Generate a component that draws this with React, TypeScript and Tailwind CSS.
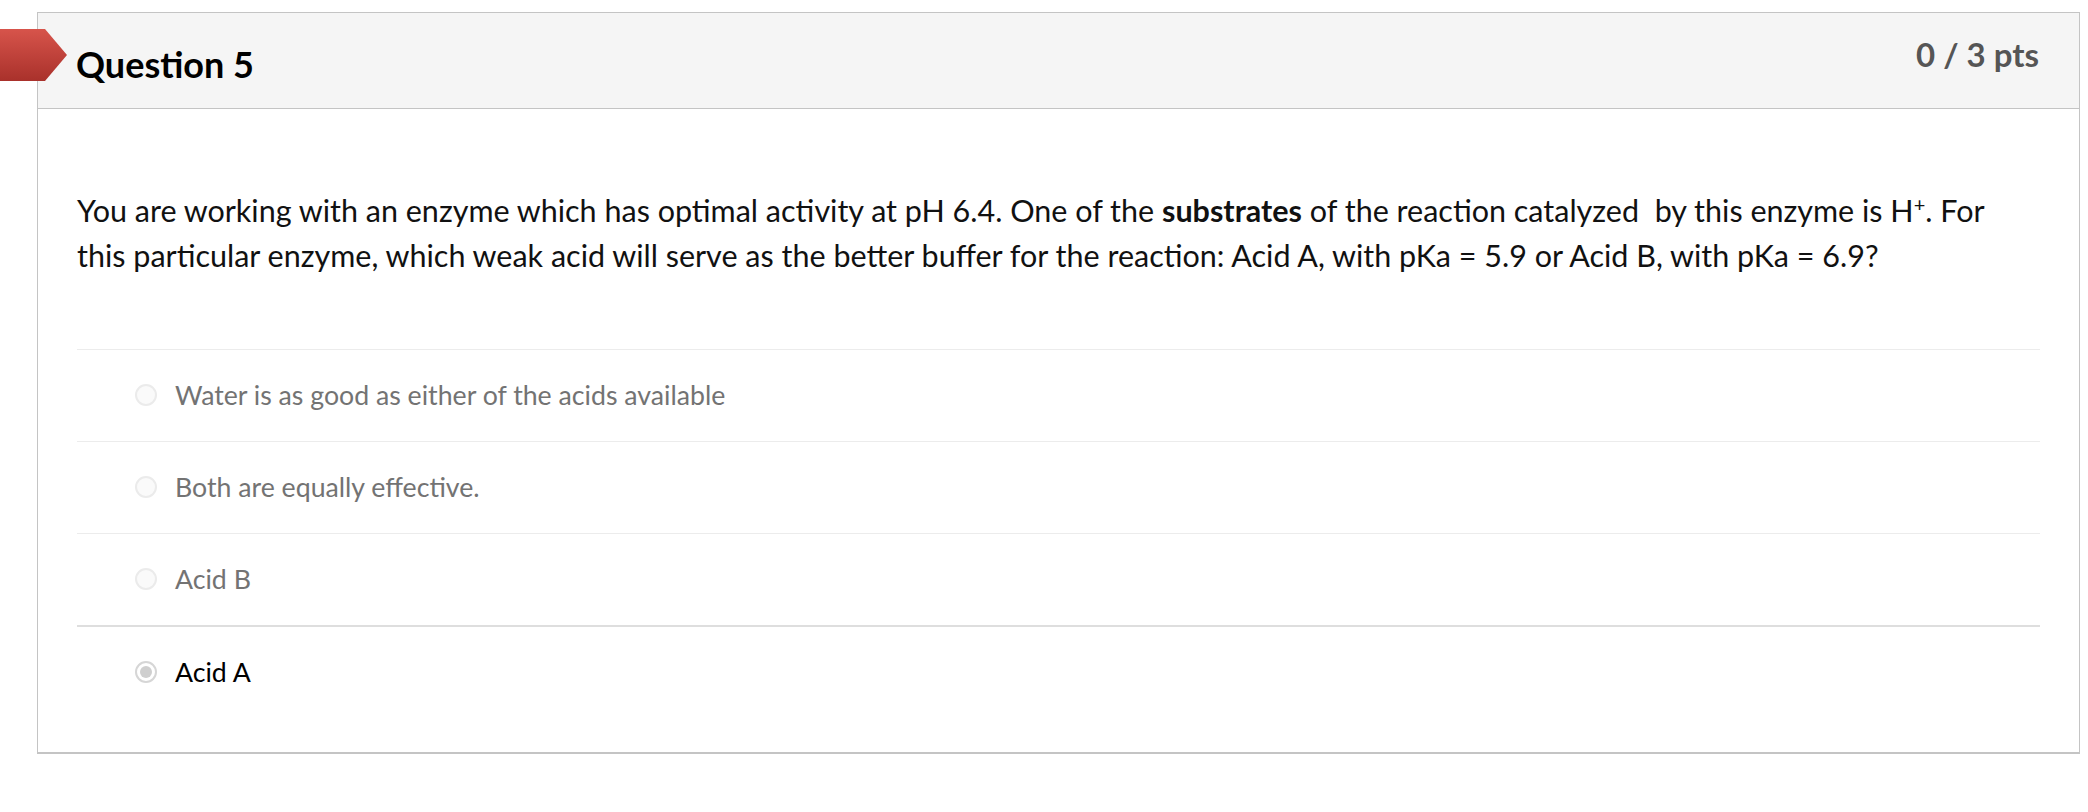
const answers = [
  { label: "Water is as good as either of the acids available", selected: false },
  { label: "Both are equally effective.", selected: false },
  { label: "Acid B", selected: false },
  { label: "Acid A", selected: true },
];

const Flag = () => (
  <svg
    className="absolute left-0 top-[29px]"
    width="68"
    height="52"
    viewBox="0 0 68 52"
  >
    <defs>
      <linearGradient id="flagFill" x1="0" y1="0" x2="0" y2="1">
        <stop offset="0" stopColor="#d7544b" />
        <stop offset="1" stopColor="#a9312b" />
      </linearGradient>
    </defs>
    <path d="M0 0 H45 L67 26 L45 52 H0 Z" fill="url(#flagFill)" />
  </svg>
);

const Radio = ({ checked }: { checked: boolean }) => (
  <span
    className={
      checked
        ? "flex h-[22px] w-[22px] shrink-0 items-center justify-center rounded-full border-2 border-[#d6d6d6] bg-white"
        : "h-[22px] w-[22px] shrink-0 rounded-full border-2 border-[#ebebeb] bg-[#fafafa]"
    }
  >
    {checked && <span className="h-[12px] w-[12px] rounded-full bg-[#cfcfcf]" />}
  </span>
);

export default function App() {
  return (
    <div className="relative min-h-[812px] bg-white pt-[12px] font-['Lato','Noto_Sans',sans-serif]">
      <Flag />
      <div className="ml-[37px] w-[2043px] border border-b-2 border-[#c4c4c4]">
        <div className="flex h-[96px] items-start justify-between border-b border-[#c4c4c4] bg-[#f5f5f5] pl-[38px] pr-[40px]">
          <h2 className="pt-[33px] text-[36px] font-bold leading-[36px] text-black">
            Question 5
          </h2>
          <div className="pt-[25px] text-[33px] font-bold leading-[33px] text-[#555]">
            0 / 3 pts
          </div>
        </div>

        <div className="px-[39px] pb-[34px]">
          <p className="pt-[79px] pb-[71px] pr-[24px] text-[30.5px] leading-[45px] text-[#111]">
            You are working with an enzyme which has optimal activity at pH 6.4. One of the{" "}
            <strong className="font-bold">substrates</strong> of the reaction catalyzed{"\u00a0"} by
            this enzyme is H<sup className="text-[20px]">+</sup>. For this particular enzyme, which
            weak acid will serve as the better buffer for the reaction: Acid A, with pKa = 5.9 or
            Acid B, with pKa = 6.9?
          </p>

          <div className="flex flex-col">
            {answers.map((a, i) => (
              <div
                key={a.label}
                className={
                  i === 3
                    ? "flex items-center gap-[18px] border-t-2 border-[#dedede] pt-[27px] pb-[28px] pl-[58px]"
                    : "flex items-center gap-[18px] border-t border-[#ececec] pt-[27px] pb-[28px] pl-[58px]"
                }
              >
                <Radio checked={a.selected} />
                <span
                  className={
                    a.selected
                      ? "text-[26.7px] leading-[36px] text-black"
                      : "text-[26.7px] leading-[36px] text-[#737373]"
                  }
                >
                  {a.label}
                </span>
              </div>
            ))}
          </div>
        </div>
      </div>
    </div>
  );
}
